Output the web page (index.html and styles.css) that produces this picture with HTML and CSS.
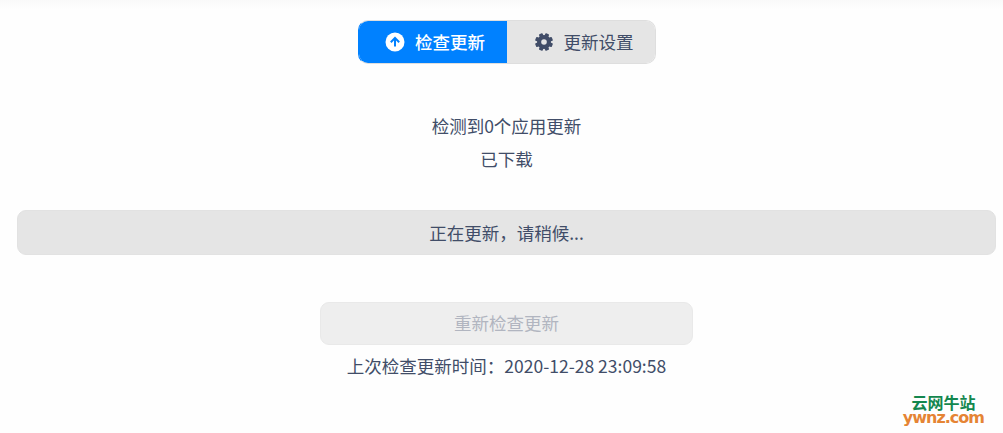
FILE: index.html
```html
<!DOCTYPE html>
<html lang="zh-CN">
<head>
    <meta charset="UTF-8">
    <meta name="viewport" content="width=device-width, initial-scale=1.0">
    <title>检查更新</title>
    <link rel="stylesheet" href="styles.css">
</head>
<body>
    <div class="tabs">
        <button class="tab active">
            <svg class="tab-icon" viewBox="0 0 20 20">
                <circle cx="10" cy="10" r="9.5" fill="#fff"/>
                <path d="M10 14.6V6.2M5.8 10.2L10 6l4.2 4.2" fill="none" stroke="#0081ff" stroke-width="2"/>
            </svg>
            <span>检查更新</span>
        </button>
        <button class="tab">
            <svg class="tab-icon" viewBox="0 0 20 20">
                <g fill="#414d68">
                    <circle cx="10" cy="10" r="7"/>
                    <rect x="8" y="1" width="4" height="18" rx="0.8" transform="rotate(22.5 10 10)"/>
                    <rect x="8" y="1" width="4" height="18" rx="0.8" transform="rotate(67.5 10 10)"/>
                    <rect x="8" y="1" width="4" height="18" rx="0.8" transform="rotate(112.5 10 10)"/>
                    <rect x="8" y="1" width="4" height="18" rx="0.8" transform="rotate(157.5 10 10)"/>
                </g>
                <circle cx="10" cy="10" r="2.8" fill="#e5e5e5"/>
            </svg>
            <span>更新设置</span>
        </button>
    </div>

    <div class="status">
        <p>检测到0个应用更新</p>
        <p>已下载</p>
    </div>

    <div class="progress">正在更新，请稍候...</div>

    <button class="recheck" disabled>重新检查更新</button>
    <p class="last-time">上次检查更新时间：2020-12-28 23:09:58</p>

    <div class="watermark">
        <div class="site-name">云网牛站</div>
        <div class="site-url">ywnz.com</div>
    </div>
</body>
</html>
```
FILE: styles.css
```css
* {
    box-sizing: border-box;
}
body {
    margin: 0;
    height: 433px;
    padding: 20px 7px 0 17px;
    display: flex;
    flex-direction: column;
    align-items: center;
    overflow: hidden;
    position: relative;
    background: linear-gradient(#f9f9f9, #fefefe 9px);
    color: #414d68;
    font-family: "Noto Sans CJK SC", sans-serif;
    font-size: 17.5px;
    line-height: 33px;
}
p {
    margin: 0;
}
button {
    font: inherit;
    color: inherit;
    border: none;
    padding: 0;
}
.tabs {
    display: flex;
    width: 298px;
    height: 44px;
    margin-left: 1px;
    border: 1px solid #dedede;
    border-left-color: #0081ff;
    border-radius: 10px;
    overflow: hidden;
}
.tab {
    width: 148px;
    display: flex;
    align-items: center;
    justify-content: center;
    gap: 10px;
    padding: 0 0 1px 5px;
    background-color: #e5e5e5;
}
.tab.active {
    padding-left: 4px;
    background-color: #0081ff;
    color: white;
    font-weight: 500;
}
.tab-icon {
    width: 20px;
    height: 20px;
}
.status {
    margin-top: 45px;
    text-align: center;
}
.progress {
    width: 100%;
    height: 45px;
    margin-top: 35px;
    border: 1px solid #e2e2e2;
    border-radius: 9px;
    background-color: #e5e5e5;
    line-height: 44px;
    text-align: center;
}
.recheck {
    width: 373px;
    height: 43px;
    margin-top: 47px;
    padding-bottom: 2px;
    border: 1px solid #e9e9e9;
    border-radius: 9px;
    background-color: #eee;
    color: #b1b5c0;
}
.last-time {
    margin-top: 4px;
}
.watermark {
    position: absolute;
    right: 19px;
    bottom: 7px;
    text-align: center;
}
.site-name {
    color: #14874e;
    font-size: 16px;
    font-weight: 700;
    line-height: 16px;
}
.site-url {
    color: #e58434;
    font-family: "DejaVu Sans", sans-serif;
    font-size: 16px;
    font-weight: 700;
    line-height: 16px;
    letter-spacing: -1px;
}
```
